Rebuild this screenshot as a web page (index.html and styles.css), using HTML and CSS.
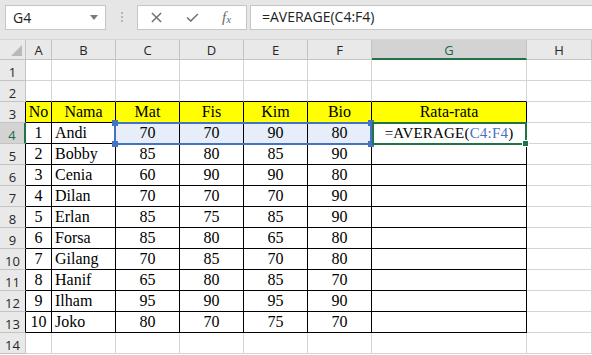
FILE: index.html
```html
<!DOCTYPE html>
<html lang="id">
<head>
  <meta charset="UTF-8" />
  <title>Rata-rata Nilai</title>
  <link rel="stylesheet" href="styles.css">
</head>
<body>
  <div class="toolbar">
    <div class="namebox">
      <span>G4</span>
      <svg class="caret" viewBox="0 0 8 5"><polygon points="0,0 8,0 4,5" /></svg>
    </div>
    <div class="grip"><i></i><i></i><i></i></div>
    <div class="fxbox">
      <svg class="tool-icon" viewBox="0 0 12 12"><path d="M1 1L11 11M11 1L1 11" /></svg>
      <svg class="tool-icon" viewBox="0 0 14 10"><path d="M1 5L5 9L13 1" /></svg>
      <span class="fx">f<sub>x</sub></span>
    </div>
    <div class="formula">=AVERAGE(C4:F4)</div>
  </div>

  <div class="sheet">
    <div class="hd corner"><svg viewBox="0 0 11 11"><polygon points="11,0 11,11 0,11" /></svg></div>
    <div class="hd">A</div><div class="hd">B</div><div class="hd">C</div><div class="hd">D</div>
    <div class="hd">E</div><div class="hd">F</div><div class="hd hd-on">G</div><div class="hd">H</div>

    <div class="rh">1</div>
    <div class="cell"></div><div class="cell"></div><div class="cell"></div><div class="cell"></div>
    <div class="cell"></div><div class="cell"></div><div class="cell"></div><div class="cell"></div>

    <div class="rh">2</div>
    <div class="cell above"></div><div class="cell above"></div><div class="cell above"></div><div class="cell above"></div>
    <div class="cell above"></div><div class="cell above"></div><div class="cell above"></div><div class="cell"></div>

    <div class="rh edge">3</div>
    <div class="cell tb yl mid">No</div><div class="cell tb yl mid">Nama</div><div class="cell tb yl mid">Mat</div><div class="cell tb yl mid">Fis</div>
    <div class="cell tb yl mid">Kim</div><div class="cell tb yl mid">Bio</div><div class="cell tb yl mid">Rata-rata</div><div class="cell"></div>

    <div class="rh rh-on">4</div>
    <div class="cell tb mid">1</div><div class="cell tb">Andi</div><div class="cell tb mid sel">70</div><div class="cell tb mid sel">70</div>
    <div class="cell tb mid sel">90</div><div class="cell tb mid sel">80</div>
    <div class="cell tb mid edit">=AVERAGE(<span class="ref">C4:F4</span>)</div><div class="cell"></div>

    <div class="rh edge">5</div>
    <div class="cell tb mid">2</div><div class="cell tb">Bobby</div><div class="cell tb mid">85</div><div class="cell tb mid">80</div>
    <div class="cell tb mid">85</div><div class="cell tb mid">90</div><div class="cell tb"></div><div class="cell"></div>

    <div class="rh edge">6</div>
    <div class="cell tb mid">3</div><div class="cell tb">Cenia</div><div class="cell tb mid">60</div><div class="cell tb mid">90</div>
    <div class="cell tb mid">90</div><div class="cell tb mid">80</div><div class="cell tb"></div><div class="cell"></div>

    <div class="rh edge">7</div>
    <div class="cell tb mid">4</div><div class="cell tb">Dilan</div><div class="cell tb mid">70</div><div class="cell tb mid">70</div>
    <div class="cell tb mid">70</div><div class="cell tb mid">90</div><div class="cell tb"></div><div class="cell"></div>

    <div class="rh edge">8</div>
    <div class="cell tb mid">5</div><div class="cell tb">Erlan</div><div class="cell tb mid">85</div><div class="cell tb mid">75</div>
    <div class="cell tb mid">85</div><div class="cell tb mid">90</div><div class="cell tb"></div><div class="cell"></div>

    <div class="rh edge">9</div>
    <div class="cell tb mid">6</div><div class="cell tb">Forsa</div><div class="cell tb mid">85</div><div class="cell tb mid">80</div>
    <div class="cell tb mid">65</div><div class="cell tb mid">80</div><div class="cell tb"></div><div class="cell"></div>

    <div class="rh edge">10</div>
    <div class="cell tb mid">7</div><div class="cell tb">Gilang</div><div class="cell tb mid">70</div><div class="cell tb mid">85</div>
    <div class="cell tb mid">70</div><div class="cell tb mid">80</div><div class="cell tb"></div><div class="cell"></div>

    <div class="rh edge">11</div>
    <div class="cell tb mid">8</div><div class="cell tb">Hanif</div><div class="cell tb mid">65</div><div class="cell tb mid">80</div>
    <div class="cell tb mid">85</div><div class="cell tb mid">70</div><div class="cell tb"></div><div class="cell"></div>

    <div class="rh edge">12</div>
    <div class="cell tb mid">9</div><div class="cell tb">Ilham</div><div class="cell tb mid">95</div><div class="cell tb mid">90</div>
    <div class="cell tb mid">95</div><div class="cell tb mid">90</div><div class="cell tb"></div><div class="cell"></div>

    <div class="rh edge">13</div>
    <div class="cell tb mid">10</div><div class="cell tb">Joko</div><div class="cell tb mid">80</div><div class="cell tb mid">70</div>
    <div class="cell tb mid">75</div><div class="cell tb mid">70</div><div class="cell tb"></div><div class="cell"></div>

    <div class="rh">14</div>
    <div class="cell"></div><div class="cell"></div><div class="cell"></div><div class="cell"></div>
    <div class="cell"></div><div class="cell"></div><div class="cell"></div><div class="cell"></div>

    <!-- range referenced by the formula -->
    <div class="ref-box">
      <i class="knob tl"></i><i class="knob tr"></i><i class="knob bl"></i><i class="knob br"></i>
    </div>
    <!-- active cell G4 -->
    <div class="active-box"><i class="fill-handle"></i></div>
  </div>
</body>
</html>
```

FILE: styles.css
```css
body {
  margin: 0;
  width: 592px;
  height: 355px;
  overflow: hidden;
  background-color: #fff;
  font-family: "Open Sans", "Liberation Sans", sans-serif;
}
.toolbar {
  height: 40px;
  box-sizing: border-box;
  padding: 5px 0 0 5px;
  display: flex;
  align-items: flex-start;
  background-color: #e6e6e6;
  border-bottom: 1px solid #d6d6d6;
}
.namebox,
.fxbox,
.formula {
  height: 25px;
  box-sizing: border-box;
  background-color: #fff;
  border: 1px solid #c6c6c6;
}
.namebox {
  width: 101px;
  display: flex;
  align-items: center;
  justify-content: space-between;
  padding: 0 7px 0 7px;
  font-size: 14px;
  color: #222;
}
.caret {
  width: 8px;
  height: 5px;
  fill: #7a7a7a;
}
.grip {
  width: 31px;
  display: flex;
  flex-direction: column;
  align-items: center;
  gap: 2px;
  padding-top: 7px;
}
.grip i {
  width: 2px;
  height: 2px;
  background-color: #b4b4b4;
}
.fxbox {
  width: 110px;
  display: flex;
  align-items: center;
  padding-left: 13px;
  gap: 0;
}
.tool-icon {
  fill: none;
  stroke: #6f6f6f;
  stroke-width: 1.6;
}
.tool-icon:first-child {
  width: 11px;
  height: 11px;
  margin-right: 24px;
}
.tool-icon:nth-child(2) {
  width: 13px;
  height: 9px;
  margin-right: 23px;
}
.fx {
  font-family: "Liberation Serif", serif;
  font-style: italic;
  font-size: 15px;
  color: #6a6a6a;
  line-height: 1;
}
.fx sub {
  font-size: 11px;
  vertical-align: -1px;
}
.formula {
  flex: 1;
  margin-left: 3px;
  border-right: none;
  padding-left: 11px;
  font-size: 14px;
  line-height: 22px;
  color: #222;
}

.sheet {
  position: relative;
  display: grid;
  grid-template-columns: 26px 26px repeat(5, 64px) 155px 65px;
  grid-template-rows: 20px repeat(14, 21px);
}
.hd,
.rh {
  box-sizing: border-box;
  background-color: #e9e9e9;
  border-right: 1px solid #c4c4c4;
  border-bottom: 1px solid #c4c4c4;
  font-size: 13px;
  color: #262626;
  display: flex;
  align-items: center;
  justify-content: center;
  padding-top: 1px;
}
.corner {
  justify-content: flex-end;
  align-items: flex-end;
  padding: 0 3px 3px 0;
}
.corner svg {
  width: 11px;
  height: 11px;
  fill: #b9b9b9;
}
.hd-on {
  background-color: #d3d3d3;
  border-bottom: 2px solid #217346;
  color: #1d6a40;
}
.rh {
  padding-top: 3px;
}
.rh.edge {
  border-right-color: #000;
}
.rh-on {
  background-color: #d3d3d3;
  border-right: 2px solid #217346;
  color: #1d6a40;
}
.cell {
  box-sizing: border-box;
  border-right: 1px solid #d4d4d4;
  border-bottom: 1px solid #d4d4d4;
  font-family: "Liberation Serif", serif;
  font-size: 16px;
  line-height: 20px;
  color: #000;
  padding-left: 3px;
  white-space: nowrap;
}
.cell.above {
  border-bottom-color: #000;
}
.cell.tb {
  border-right-color: #000;
  border-bottom-color: #000;
}
.mid {
  text-align: center;
  padding-left: 0;
}
.edit {
  font-size: 15px;
  letter-spacing: 0.2px;
}
.yl {
  background-color: #ffff00;
}
.sel {
  background-color: #e7eef9;
}
.ref {
  color: #4472c4;
}

.ref-box {
  position: absolute;
  left: 114px;
  top: 82px;
  width: 258px;
  height: 23px;
  box-sizing: border-box;
  border: 2px solid #4472c4;
}
.knob {
  position: absolute;
  width: 6px;
  height: 6px;
  background-color: #4472c4;
}
.knob.tl { left: -4px; top: -4px; }
.knob.tr { right: -4px; top: -4px; }
.knob.bl { left: -4px; bottom: -4px; }
.knob.br { right: -4px; bottom: -4px; }
.active-box {
  position: absolute;
  left: 372px;
  top: 82px;
  width: 155px;
  height: 23px;
  box-sizing: border-box;
  border: 2px solid #217346;
}
.fill-handle {
  position: absolute;
  right: -4px;
  bottom: -4px;
  width: 5px;
  height: 5px;
  background-color: #217346;
  border: 1px solid #fff;
}
```
